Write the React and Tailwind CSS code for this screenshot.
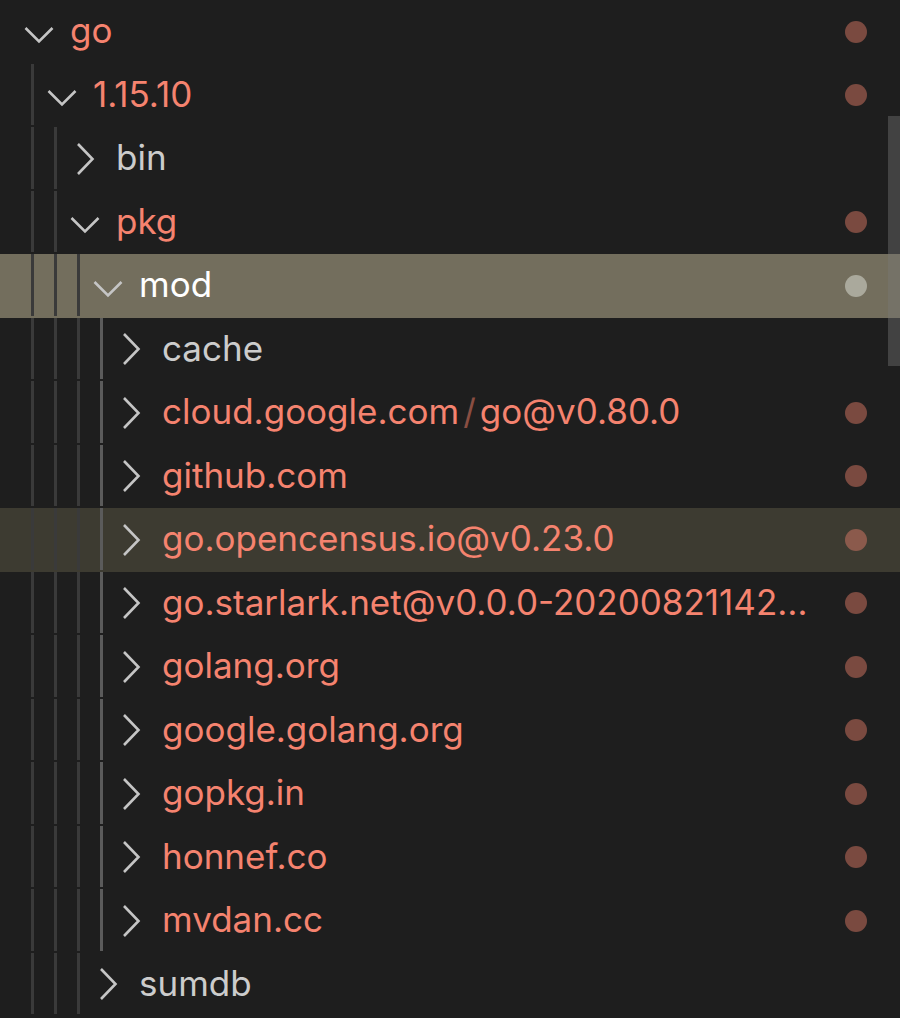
import React from "react";

const rows = [
  { name: "go", depth: 0, open: true, dot: true },
  { name: "1.15.10", depth: 1, open: true, dot: true },
  { name: "bin", depth: 2, open: false, plain: true },
  { name: "pkg", depth: 2, open: true, dot: true },
  { name: "mod", depth: 3, open: true, dot: true, selected: true },
  { name: "cache", depth: 4, plain: true },
  { name: ["cloud.google.com", "go@v0.80.0"], depth: 4, dot: true },
  { name: "github.com", depth: 4, dot: true },
  { name: "go.opencensus.io@v0.23.0", depth: 4, dot: true, hover: true },
  { name: "go.starlark.net@v0.0.0-20200821142938-949cc6f4b097", depth: 4, dot: true },
  { name: "golang.org", depth: 4, dot: true },
  { name: "google.golang.org", depth: 4, dot: true },
  { name: "gopkg.in", depth: 4, dot: true },
  { name: "honnef.co", depth: 4, dot: true },
  { name: "mvdan.cc", depth: 4, dot: true },
  { name: "sumdb", depth: 3, plain: true },
];

function Chevron({ open }) {
  if (open) {
    return (
      <svg width="30" height="30" viewBox="0 0 30 30" className="shrink-0 translate-y-[3px]">
        <polyline points="1.5,8 15,21.5 28.5,8" fill="none" stroke="#c5c5c5" strokeWidth="2.6" />
      </svg>
    );
  }
  return (
    <svg width="30" height="32" viewBox="0 0 30 32" className="shrink-0">
      <polyline points="8,1 22.5,16 8,31" fill="none" stroke="#c5c5c5" strokeWidth="2.6" />
    </svg>
  );
}

function Row({ row }) {
  const bg = row.selected ? "bg-[#736e5d]" : row.hover ? "bg-[#3d3b31]" : "";
  const text = row.selected ? "text-white" : row.plain ? "text-[#cccccc]" : "text-[#f5836f]";
  const dotColor = row.selected ? "bg-[#aaa99c]" : row.hover ? "bg-[#8b5a4c]" : "bg-[#7a4a40]";
  const guides = [];
  for (let i = 0; i < row.depth; i++) {
    // guide under "mod" is the active one
    const active = i === 3 && row.depth === 4;
    guides.push(
      <div key={i} className="w-[23px] shrink-0 self-stretch">
        <div className={`w-[3px] h-[calc(100%-2px)] ${active ? "bg-[#5b5b5b]" : "bg-[#3a3a3a]"}`} />
      </div>
    );
  }
  return (
    <div className={`flex items-center h-[63.5px] pl-[31px] ${bg}`}>
      {guides}
      <div className="w-[16px] shrink-0 flex justify-center">
        <Chevron open={row.open} />
      </div>
      <div className={`ml-[23px] flex-1 min-w-0 truncate text-[35px] leading-[1.35] -translate-y-[1px] ${text}`}>
        {Array.isArray(row.name) ? (
          <>
            {row.name[0]}
            <span className="px-[4px] text-[#8a4e42]">/</span>
            {row.name[1]}
          </>
        ) : (
          row.name
        )}
      </div>
      <div className="w-[22px] shrink-0 ml-[30px] mr-[33px] flex justify-center">
        {row.dot && <div className={`w-[22px] h-[22px] rounded-full ${dotColor}`} />}
      </div>
    </div>
  );
}

export default function App() {
  return (
    <div
      className="relative w-[900px] h-[1018px] overflow-hidden bg-[#1e1e1e]"
      style={{ fontFamily: "Inter, 'Noto Sans', sans-serif" }}
    >
      {rows.map((r, i) => (
        <Row key={i} row={r} />
      ))}
      <div className="absolute right-0 top-[116px] w-[12px] h-[250px] bg-[rgba(121,121,121,0.4)]" />
    </div>
  );
}
